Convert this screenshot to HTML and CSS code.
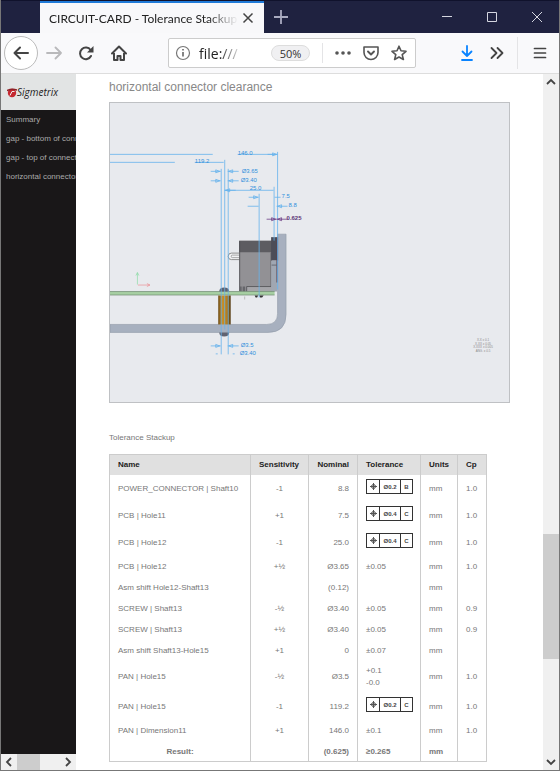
FILE: index.html
```html
<!DOCTYPE html>
<html lang="en">
<head>
  <meta charset="UTF-8">
  <meta name="viewport" content="width=device-width, initial-scale=1">
  <title>CIRCUIT-CARD - Tolerance Stackup</title>
  <link rel="stylesheet" href="styles.css">
</head>
<body>
  <div class="window">
    <header class="titlebar">
      <div class="tab">
        <span class="tab-title">CIRCUIT-CARD - Tolerance Stackup</span>
        <button type="button" class="tab-close" aria-label="Close tab">
          <svg width="12" height="12" viewBox="0 0 12 12"><path d="M1.5 1.5l9 9M10.5 1.5l-9 9" stroke="#444" stroke-width="1.5"/></svg>
        </button>
      </div>
      <button type="button" class="new-tab" aria-label="New tab">
        <svg width="14" height="14" viewBox="0 0 14 14"><path d="M7 0v14M0 7h14" stroke="#a9abc0" stroke-width="1.8"/></svg>
      </button>
      <div class="window-buttons">
        <button type="button" aria-label="Minimize"><svg width="12" height="12" viewBox="0 0 12 12"><path d="M1 5.5h10" stroke="#d5d6e0"/></svg></button>
        <button type="button" aria-label="Maximize"><svg width="12" height="12" viewBox="0 0 12 12"><path d="M1.5 1.5h9v9h-9z" fill="none" stroke="#d5d6e0"/></svg></button>
        <button type="button" aria-label="Close"><svg width="12" height="12" viewBox="0 0 12 12"><path d="M1 1l10 10M11 1L1 11" stroke="#d5d6e0"/></svg></button>
      </div>
    </header>

    <nav class="toolbar">
      <button type="button" class="back" aria-label="Back">
        <svg width="18" height="16" viewBox="0 0 18 16"><path d="M8 2.500L2.500 8l5.500 5.500M2.500 8H16" fill="none" stroke="#444" stroke-width="2" stroke-linecap="round" stroke-linejoin="round"/></svg>
      </button>
      <button type="button" aria-label="Forward">
        <svg width="16" height="16" viewBox="0 0 16 16"><path d="M9.500 2.500L15 8l-5.500 5.500M15 8H1" fill="none" stroke="#b9b9bb" stroke-width="1.8" stroke-linecap="round" stroke-linejoin="round"/></svg>
      </button>
      <button type="button" aria-label="Reload">
        <svg width="16" height="16" viewBox="0 0 16 16"><path d="M13 11A5.800 5.800 0 1 1 12.600 5" fill="none" stroke="#444" stroke-width="2" stroke-linecap="round"/><path d="M15.500 1v6.500H9z" fill="#444"/></svg>
      </button>
      <button type="button" aria-label="Home">
        <svg width="18" height="16" viewBox="0 0 18 16"><path d="M2 8.500L9 1.500l7 7" fill="none" stroke="#444" stroke-width="2" stroke-linecap="round" stroke-linejoin="round"/><path d="M4 8v7h3.500v-4h3v4H14V8" fill="none" stroke="#444" stroke-width="2" stroke-linejoin="round"/></svg>
      </button>
      <div class="urlbar">
        <svg class="info" width="16" height="16" viewBox="0 0 16 16"><circle cx="8" cy="8" r="6.500" fill="none" stroke="#777" stroke-width="1.2"/><path d="M8 7v4.500M8 4v1.600" stroke="#666" stroke-width="1.6"/></svg>
        <input type="text" class="url" value="file:///" aria-label="Address">
        <button type="button" class="zoom-level">50%</button>
        <span class="url-divider"></span>
        <button type="button" aria-label="Page actions"><svg width="16" height="16" viewBox="0 0 16 16" fill="#555"><circle cx="2" cy="8" r="1.8"/><circle cx="8" cy="8" r="1.8"/><circle cx="14" cy="8" r="1.8"/></svg></button>
        <button type="button" aria-label="Save to Pocket"><svg width="16" height="16" viewBox="0 0 16 16" fill="none" stroke="#555" stroke-width="1.6" stroke-linecap="round" stroke-linejoin="round"><path d="M1 2h14v5.500a7 7 0 0 1-14 0z"/><path d="M5 6.500l3 3 3-3" stroke-width="1.9"/></svg></button>
        <button type="button" aria-label="Bookmark"><svg width="16" height="16" viewBox="0 0 16 16"><path d="M8 1.200l2 4.600 5 .5-3.800 3.300 1.200 4.900L8 12l-4.400 2.500 1.200-4.900L1 6.300l5-.5z" fill="none" stroke="#555" stroke-width="1.6" stroke-linejoin="round"/></svg></button>
      </div>
      <div class="tools">
        <button type="button" aria-label="Downloads"><svg width="16" height="16" viewBox="0 0 16 16"><path d="M8 1v10M3.500 6.500L8 11l4.500-4.500M3 15h10" fill="none" stroke="#0a84ff" stroke-width="1.8" stroke-linecap="round" stroke-linejoin="round"/></svg></button>
        <button type="button" aria-label="More tools"><svg width="16" height="16" viewBox="0 0 16 16"><path d="M2.500 3l5 5-5 5M8.500 3l5 5-5 5" fill="none" stroke="#444" stroke-width="1.8" stroke-linecap="round" stroke-linejoin="round"/></svg></button>
        <span class="tool-divider"></span>
        <button type="button" aria-label="Menu"><svg width="16" height="16" viewBox="0 0 16 16"><path d="M2.500 3.500h11M2.500 8h11M2.500 12.500h11" stroke="#444" stroke-width="1.7" stroke-linecap="round"/></svg></button>
      </div>
    </nav>

    <div class="viewport">
      <aside class="sidebar">
        <div class="brand">
          <svg width="10" height="11" viewBox="0 0 10 11"><circle cx="5" cy="6" r="4.200" fill="#c5282f"/><path d="M0 3.500Q5 1.500 10 3" stroke="#8e2026" stroke-width="1.5" fill="none"/><path d="M3 8.500l2-4h2.500" stroke="#eee" fill="none"/></svg>
          <span>Sigmetrix</span>
        </div>
        <nav class="links">
          <a href="#summary">Summary</a>
          <a href="#gap-bottom">gap - bottom of connector</a>
          <a href="#gap-top">gap - top of connector</a>
          <a href="#clearance">horizontal connector clearance</a>
        </nav>
        <div class="scroll-x">
          <svg width="16" height="16" viewBox="0 0 16 16"><path d="M10 4L6 8l4 4" fill="none" stroke="#444" stroke-width="1.8"/></svg>
          <span class="thumb-x"></span>
          <svg width="16" height="16" viewBox="0 0 16 16"><path d="M6 4l4 4-4 4" fill="none" stroke="#444" stroke-width="1.8"/></svg>
        </div>
      </aside>

      <main class="report">
        <h1 id="clearance">horizontal connector clearance</h1>

        <svg class="drawing" viewBox="110 103 400 300" role="img" aria-label="Section view of the connector with dimensions">
          <defs>
            <linearGradient id="brass">
              <stop offset="0" stop-color="#6b4a14"/>
              <stop offset=".3" stop-color="#c8912c"/>
              <stop offset=".7" stop-color="#b47d1d"/>
              <stop offset="1" stop-color="#533a12"/>
            </linearGradient>
            <g id="in-right" fill="none">
              <path d="M-10 0H0"/><path d="M-5-1.500L-1 0l-4 1.500z"/>
            </g>
            <g id="in-left" fill="none">
              <path d="M0 0h11"/><path d="M5-1.500L1 0l4 1.500z"/>
            </g>
          </defs>

          <!-- pan -->
          <path d="M278 234.500h8.500V315q0 18-18 18H110v-8h157q11 0 11-11z" fill="#a7b0bf" stroke="#8f98a6" stroke-width=".6"/>
          <!-- connector -->
          <rect x="228.500" y="253.500" width="14" height="6.500" rx="3.200" fill="#f2f2f4" stroke="#777" stroke-width=".8"/>
          <rect x="231.500" y="255.500" width="9" height="2.500" rx="1.200" fill="none" stroke="#777" stroke-width=".6"/>
          <path d="M239.500 241h33v51h-33z" fill="#929195"/>
          <path d="M239.500 241h33v11.500h-33z" fill="#5d5c61"/>
          <path d="M247 287h28v5h-28z" fill="#a5a5a9"/>
          <path d="M247 287h24.500v-34M240 241.500v50M247 287v5" stroke="#4e4e53" stroke-width=".8" fill="none"/>
          <path d="M240 287h2v5h-2zM243 287h2.500v5H243z" fill="#66666b"/>
          <path d="M271.500 237.500h7V261h-7z" fill="#4c4d58"/>
          <path d="M271.500 261h6v31h-6z" fill="#a0a7b2"/>
          <path d="M272 265.500h5" stroke="#666b75" fill="none"/>
          <path d="M277.500 238v45" stroke="#5b4350" stroke-width="1.2" fill="none"/>
          <!-- board -->
          <path d="M110 292h165v3.500H110z" fill="#a6cfa2"/>
          <path d="M110 292h165M110 295.500h165" stroke="#6f8a71" stroke-width=".7"/>
          <path d="M255 296h3.500l-1 2H256zM259.500 296h4.500l-1.500 2h-2z" fill="#333"/>
          <path d="M245 297v3" stroke="#bbb"/>
          <!-- screw -->
          <path d="M219.500 292q0-4 5-4t5 4z" fill="#606371"/>
          <path d="M218.500 296H231v29h-12.500z" fill="url(#brass)"/>
          <path d="M219.500 333h10q0 4-5 4t-5-4z" fill="#606371"/>

          <!-- coordinate system -->
          <path d="M137.500 285v-12M136 276l1.500-3 1.500 3" stroke="#8cdba6" stroke-width=".7" fill="none"/>
          <path d="M138 285.500h12M147 284l3 1.500-3 1.500" stroke="#eb8f95" stroke-width=".7" fill="none"/>

          <g stroke="#66b2ec" stroke-width=".8" fill="none">
            <path d="M110 154.500h103M110 162.500h65M195 162.500h29M238 154.500h39"/>
            <path d="M278 152v138M225 160v170M221.500 169v186M228.500 169v186M274.500 187v54M259.500 194v104"/>
            <path d="M225 190.500h49M248 206.500h11M275 197.500h6"/>
            <use href="#in-right" x="221" y="171.500"/><use href="#in-left" x="228" y="171.500"/>
            <use href="#in-right" x="221" y="181"/><use href="#in-left" x="228" y="181"/>
            <use href="#in-right" x="278" y="154.500"/><use href="#in-left" x="225" y="190.500"/>
            <use href="#in-right" x="259" y="197.500"/><use href="#in-left" x="277" y="206.500"/>
            <use href="#in-right" x="221" y="346.500"/><use href="#in-left" x="228" y="346.500"/>
            <path d="M216 354.500h2M233 354.500h2"/>
          </g>
          <g stroke="#6d3f86" stroke-width=".8">
            <use href="#in-right" x="277" y="219.500"/><use href="#in-left" x="277" y="219.500"/>
          </g>

          <g class="dims">
            <text x="238" y="155">146.0</text>
            <text x="195" y="163">119.2</text>
            <text x="242" y="173">Ø3.65</text>
            <text x="241" y="182">Ø3.40</text>
            <text x="250" y="190">25.0</text>
            <text x="282" y="198">7.5</text>
            <text x="289" y="207">8.8</text>
            <text x="287" y="220" class="result">0.625</text>
            <text x="241" y="348">Ø3.5</text>
            <text x="240" y="356">Ø3.40</text>
          </g>
          <g class="note">
            <text x="484" y="342">X.X ± 0.1</text>
            <text x="484" y="346">X.XX ± 0.05</text>
            <text x="484" y="349">X.XXX ± 0.005</text>
            <text x="484" y="353">ANG. ± 0.5</text>
          </g>
        </svg>

        <h2>Tolerance Stackup</h2>
        <table>
          <colgroup>
            <col class="c-name"><col class="c-sens"><col class="c-nom"><col class="c-tol"><col class="c-units"><col class="c-cp">
          </colgroup>
          <thead>
            <tr><th>Name</th><th>Sensitivity</th><th>Nominal</th><th>Tolerance</th><th>Units</th><th>Cp</th></tr>
          </thead>
          <tbody>
            <tr class="gdt"><td>POWER_CONNECTOR | Shaft10</td><td>-1</td><td>8.8</td><td><span class="frame"><i><svg width="7" height="7" viewBox="0 0 7 7"><circle cx="3.5" cy="3.5" r="2"/><path d="M3.5 0v7M0 3.5h7"/></svg></i><b>Ø0.2</b><b>B</b></span></td><td>mm</td><td>1.0</td></tr>
            <tr class="gdt"><td>PCB | Hole11</td><td>+1</td><td>7.5</td><td><span class="frame"><i><svg width="7" height="7" viewBox="0 0 7 7"><circle cx="3.5" cy="3.5" r="2"/><path d="M3.5 0v7M0 3.5h7"/></svg></i><b>Ø0.4</b><b>C</b></span></td><td>mm</td><td>1.0</td></tr>
            <tr class="gdt"><td>PCB | Hole12</td><td>-1</td><td>25.0</td><td><span class="frame"><i><svg width="7" height="7" viewBox="0 0 7 7"><circle cx="3.5" cy="3.5" r="2"/><path d="M3.5 0v7M0 3.5h7"/></svg></i><b>Ø0.4</b><b>C</b></span></td><td>mm</td><td>1.0</td></tr>
            <tr><td>PCB | Hole12</td><td>+½</td><td>Ø3.65</td><td>±0.05</td><td>mm</td><td>1.0</td></tr>
            <tr><td>Asm shift Hole12-Shaft13</td><td></td><td>(0.12)</td><td></td><td>mm</td><td></td></tr>
            <tr><td>SCREW | Shaft13</td><td>-½</td><td>Ø3.40</td><td>±0.05</td><td>mm</td><td>0.9</td></tr>
            <tr><td>SCREW | Shaft13</td><td>+½</td><td>Ø3.40</td><td>±0.05</td><td>mm</td><td>0.9</td></tr>
            <tr><td>Asm shift Shaft13-Hole15</td><td>+1</td><td>0</td><td>±0.07</td><td>mm</td><td></td></tr>
            <tr class="stacked"><td>PAN | Hole15</td><td>-½</td><td>Ø3.5</td><td>+0.1<br>-0.0</td><td>mm</td><td>1.0</td></tr>
            <tr class="gdt"><td>PAN | Hole15</td><td>-1</td><td>119.2</td><td><span class="frame"><i><svg width="7" height="7" viewBox="0 0 7 7"><circle cx="3.5" cy="3.5" r="2"/><path d="M3.5 0v7M0 3.5h7"/></svg></i><b>Ø0.2</b><b>C</b></span></td><td>mm</td><td>1.0</td></tr>
            <tr><td>PAN | Dimension11</td><td>+1</td><td>146.0</td><td>±0.1</td><td>mm</td><td>1.0</td></tr>
            <tr class="total"><td>Result:</td><td></td><td>(0.625)</td><td>≥0.265</td><td>mm</td><td></td></tr>
          </tbody>
        </table>
      </main>

      <div class="scroll-y">
        <svg width="16" height="16" viewBox="0 0 16 16"><path d="M4 10l4-4 4 4" fill="none" stroke="#444" stroke-width="1.8"/></svg>
        <span class="thumb-y"></span>
        <svg width="16" height="16" viewBox="0 0 16 16"><path d="M4 6l4 4 4-4" fill="none" stroke="#444" stroke-width="1.8"/></svg>
      </div>
    </div>
  </div>
</body>
</html>
```
FILE: styles.css
```css
* {
  box-sizing: border-box;
}
body {
  margin: 0;
  font-family: "Liberation Sans", Arial, sans-serif;
  font-size: 8px;
  color: #777;
  background: #fff;
}
button {
  display: flex;
  align-items: center;
  justify-content: center;
  padding: 0;
  border: none;
  background: none;
}
svg {
  display: block;
  flex: none;
}
.window {
  display: flex;
  flex-direction: column;
  min-height: 100vh;
  border: 1px solid #777;
  border-top: none;
  border-bottom-width: 2px;
}

/* browser chrome */
.titlebar {
  display: flex;
  height: 33px;
  padding-left: 39px;
  background: #1f2240;
  border-top: 1px solid #10122c;
}
.tab {
  display: flex;
  align-items: center;
  width: 224px;
  padding: 0 10px 0 9px;
  background: #f8f8fa;
  border-top: 2px solid #1f7ad8;
}
.tab-title {
  flex: 1;
  overflow: hidden;
  white-space: nowrap;
  font: 12px Lato, sans-serif;
  color: #222;
  -webkit-mask-image: linear-gradient(to right, #000 84%, transparent);
  mask-image: linear-gradient(to right, #000 84%, transparent);
}
.tab-close {
  margin-left: 4px;
}
.new-tab {
  width: 34px;
}
.window-buttons {
  display: flex;
  margin-left: auto;
}
.window-buttons button {
  width: 45px;
}
.toolbar {
  display: flex;
  align-items: center;
  height: 41px;
  padding: 0 11px 0 3px;
  gap: 16px;
  background: #f9f9fb;
  border-bottom: 1px solid #ddd;
}
.back {
  width: 34px;
  height: 34px;
  margin-right: -8px;
  border: 1px solid #bbb;
  border-radius: 50%;
  background: #fff;
}
.urlbar {
  display: flex;
  flex: 1;
  align-items: center;
  gap: 12px;
  min-width: 0;
  height: 30px;
  margin-left: 24px;
  padding: 0 8px 0 6px;
  background: #fff;
  border: 1px solid #ccc;
  border-radius: 2px;
}
.info {
  margin-right: -4px;
}
.url {
  flex: 1;
  min-width: 0;
  padding: 0;
  border: none;
  outline: none;
  background: none;
  font: 14px "Open Sans", sans-serif;
  color: #222;
  -webkit-mask-image: linear-gradient(to right, #000 20px, transparent 44px);
  mask-image: linear-gradient(to right, #000 20px, transparent 44px);
}
.zoom-level {
  width: 39px;
  height: 16px;
  border: 1px solid #ddd;
  border-radius: 8px;
  background: #f0f0f2;
  font: 11px "Open Sans", sans-serif;
  color: #333;
}
.url-divider,
.tool-divider {
  width: 1px;
  height: 20px;
  background: #e4e4e6;
}
.tools {
  display: flex;
  align-items: center;
  gap: 14px;
  margin-left: 27px;
}
.tool-divider {
  height: 32px;
  margin-left: -2px;
}

/* page */
.viewport {
  display: flex;
  flex: 1;
}
.sidebar {
  display: flex;
  flex-direction: column;
  flex: none;
  width: 75px;
  background: #191718;
}
.brand {
  display: flex;
  align-items: center;
  height: 36px;
  padding-left: 6px;
  background: #e2e4e4;
  font: italic 10px "Open Sans", sans-serif;
  color: #222;
}
.links {
  flex: 1;
  overflow: hidden;
}
.links a {
  display: block;
  padding-left: 5px;
  line-height: 19px;
  white-space: nowrap;
  text-decoration: none;
  color: #aaa;
}
.scroll-x {
  display: flex;
  height: 16px;
  background: #f0f0f0;
}
.thumb-x {
  width: 23px;
  margin-right: auto;
  background: #cdcdcd;
}
.report {
  flex: 1;
  min-width: 0;
  padding: 4px 33px 8px;
}
h1 {
  margin: 0 0 6px;
  font-size: 12px;
  font-weight: normal;
  line-height: 18px;
  color: #888;
}
.drawing {
  width: 100%;
  border: 1px solid #bfc1c4;
  background: #e8eaee;
}
.dims {
  font-size: 6px;
  fill: #2f8fdc;
}
.dims .result {
  font-weight: bold;
  fill: #5b3477;
}
.note {
  font-size: 3px;
  text-anchor: middle;
  fill: #888;
}
h2 {
  margin: 29px 0 10px;
  font-size: 8px;
  font-weight: normal;
  line-height: 12px;
}
table {
  table-layout: fixed;
  width: 378px;
  border-collapse: collapse;
  border: 1px solid #ccc;
}
.c-name { width: 141px; }
.c-sens { width: 58px; }
.c-nom { width: 49px; }
.c-tol { width: 63px; }
.c-units { width: 37px; }
.c-cp { width: 29px; }
th,
td {
  height: 21px;
  padding: 0 8px;
  border-left: 1px solid #ccc;
  line-height: 12px;
  text-align: left;
  white-space: nowrap;
}
th {
  height: 20px;
  background: #e0e0e0;
  color: #222;
}
td {
  padding-top: 1px;
}
td:nth-child(2) {
  text-align: center;
}
th:nth-child(3),
td:nth-child(3) {
  text-align: right;
}
.gdt td {
  height: 27px;
  padding-top: 2px;
}
.stacked td {
  height: 32px;
}
.total td {
  font-weight: bold;
}
.total td:first-child {
  text-align: center;
}
.gdt td:nth-child(4) {
  padding: 0 8px 3px;
}
.frame {
  display: flex;
  width: 47px;
  height: 15px;
  border: 1px solid #333;
  font-size: 6px;
  color: #444;
}
.frame > * {
  display: flex;
  align-items: center;
  justify-content: center;
  width: 12px;
}
.frame > * + * {
  border-left: 1px solid #333;
}
.frame b:nth-child(2) {
  width: 21px;
}
.frame svg {
  fill: none;
  stroke: #555;
  stroke-width: 1px;
}
.scroll-y {
  display: flex;
  flex-direction: column;
  flex: none;
  width: 16px;
  background: #f0f0f0;
}
.scroll-y::before,
.scroll-y::after {
  content: "";
}
.scroll-y svg:first-of-type {
  order: -2;
}
.scroll-y::before {
  order: -1;
  flex: 444;
}
.thumb-y {
  flex: 125;
  background: #cdcdcd;
}
.scroll-y::after {
  flex: 95;
}
.scroll-y svg:last-of-type {
  order: 1;
}
```
